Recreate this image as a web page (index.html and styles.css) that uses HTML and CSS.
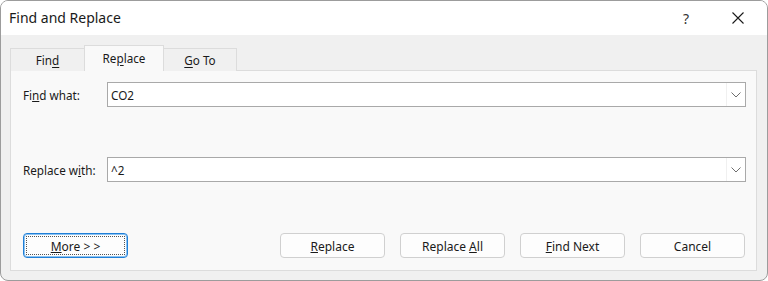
FILE: index.html
```html
<!DOCTYPE html>
<html lang="en">
<head>
    <meta charset="UTF-8">
    <title>Find and Replace</title>
    <link rel="stylesheet" href="styles.css">
</head>
<body>
    <div class="dialog">
        <div class="titlebar">
            <span class="title">Find and Replace</span>
            <span class="help">?</span>
            <span class="close">
                <svg width="12" height="12" viewBox="0 0 12 12"><path d="M0.5 0.5 L11.5 11.5 M11.5 0.5 L0.5 11.5" stroke="#1a1a1a" stroke-width="1.1" fill="none"/></svg>
            </span>
        </div>
        <div class="body">
            <div class="tabs">
                <div class="tab tab-find">Fin<u>d</u></div>
                <div class="tab tab-replace active">Re<u>p</u>lace</div>
                <div class="tab tab-goto"><u>G</u>o To</div>
            </div>
            <div class="panel">
                <div class="row">
                    <label class="label">Fi<u>n</u>d what:</label>
                    <div class="combo">
                        <span class="value">CO2</span>
                        <span class="drop">
                            <svg width="10" height="6" viewBox="0 0 10 6"><path d="M0.5 0.5 L5 5 L9.5 0.5" stroke="#6e6e6e" stroke-width="1" fill="none"/></svg>
                        </span>
                    </div>
                </div>
                <div class="row row-replace">
                    <label class="label">Replace w<u>i</u>th:</label>
                    <div class="combo">
                        <span class="value">^2</span>
                        <span class="drop">
                            <svg width="10" height="6" viewBox="0 0 10 6"><path d="M0.5 0.5 L5 5 L9.5 0.5" stroke="#6e6e6e" stroke-width="1" fill="none"/></svg>
                        </span>
                    </div>
                </div>
                <div class="buttons">
                    <button class="btn btn-more"><span class="focus"><u>M</u>ore &gt; &gt;</span></button>
                    <div class="actions">
                        <button class="btn"><u>R</u>eplace</button>
                        <button class="btn">Replace <u>A</u>ll</button>
                        <button class="btn"><u>F</u>ind Next</button>
                        <button class="btn">Cancel</button>
                    </div>
                </div>
            </div>
        </div>
    </div>
</body>
</html>
```

FILE: styles.css
```css
*{
    margin: 0;
    padding: 0;
    box-sizing: border-box;
}
html,body{
    width: 768px;
    height: 281px;
    overflow: hidden;
    background: #ffffff;
}
body{
    font-family: "Noto Sans", "Open Sans", sans-serif;
    font-size: 11.7px;
    color: #1a1a1a;
}
.dialog{
    width: 768px;
    height: 281px;
    border: 1px solid #9c9c9c;
    border-radius: 8px;
    overflow: hidden;
    background: #f0f0f0;
    display: flex;
    flex-direction: column;
}
.titlebar{
    height: 34px;
    background: #ffffff;
    display: flex;
    align-items: center;
    padding-left: 8px;
    flex-shrink: 0;
}
.titlebar .title{
    font-size: 14px;
    flex: 1;
    padding-bottom: 1px;
}
.titlebar .help{
    font-size: 14px;
    width: 20px;
    text-align: center;
    margin-right: 36px;
    color: #333;
}
.titlebar .close{
    display: flex;
    margin-right: 23px;
}
.body{
    flex: 1;
    padding: 10px 10px 9px 9px;
    display: flex;
    flex-direction: column;
}
.tabs{
    display: flex;
    align-items: flex-end;
    height: 26px;
    margin-bottom: -1px;
    position: relative;
    z-index: 1;
}
.tab{
    height: 23px;
    border: 1px solid #dcdcdc;
    border-bottom: none;
    background: #f0f0f0;
    text-align: center;
    line-height: 23px;
    color: #1a1a1a;
}
.tab u{
    text-underline-offset: 2px;
}
.tab-find{
    width: 74px;
    border-right: none;
}
.tab-replace{
    width: 80px;
}
.tab-goto{
    width: 73px;
    border-left: none;
}
.tab.active{
    height: 26px;
    background: #f9f9f9;
    line-height: 25px;
}
.panel{
    flex: 1;
    border: 1px solid #dcdcdc;
    background: #f9f9f9;
    padding: 11px 10px 12px 12px;
    display: flex;
    flex-direction: column;
}
.row{
    display: flex;
    align-items: center;
    height: 25px;
}
.row-replace{
    margin-top: 50px;
}
.label{
    width: 84px;
    flex-shrink: 0;
}
.combo{
    flex: 1;
    height: 25px;
    border: 1px solid #a9a9a9;
    background: #ffffff;
    display: flex;
    align-items: center;
}
.combo .value{
    flex: 1;
    padding-left: 3px;
}
.combo .drop{
    width: 19px;
    height: 23px;
    border-left: 1px solid #f0f0f0;
    display: flex;
    align-items: center;
    justify-content: center;
}
.buttons{
    margin-top: auto;
    display: flex;
    align-items: center;
    justify-content: space-between;
    padding-right: 1px;
}
.actions{
    display: flex;
    gap: 15px;
}
.btn{
    width: 105px;
    height: 25px;
    font-family: inherit;
    font-size: 12px;
    color: #1a1a1a;
    background: #fdfdfd;
    border: 1px solid #d0d0d0;
    border-radius: 4px;
    padding-top: 1px;
}
.btn-more{
    border: 1px solid #1f7fd8;
    box-shadow: 0 0 0 1px #8cc2f0 inset;
    padding: 2px;
    display: flex;
}
.btn-more .focus{
    flex: 1;
    border: 1px dotted #555;
    display: flex;
    align-items: center;
    justify-content: center;
    padding-top: 1px;
}
```
